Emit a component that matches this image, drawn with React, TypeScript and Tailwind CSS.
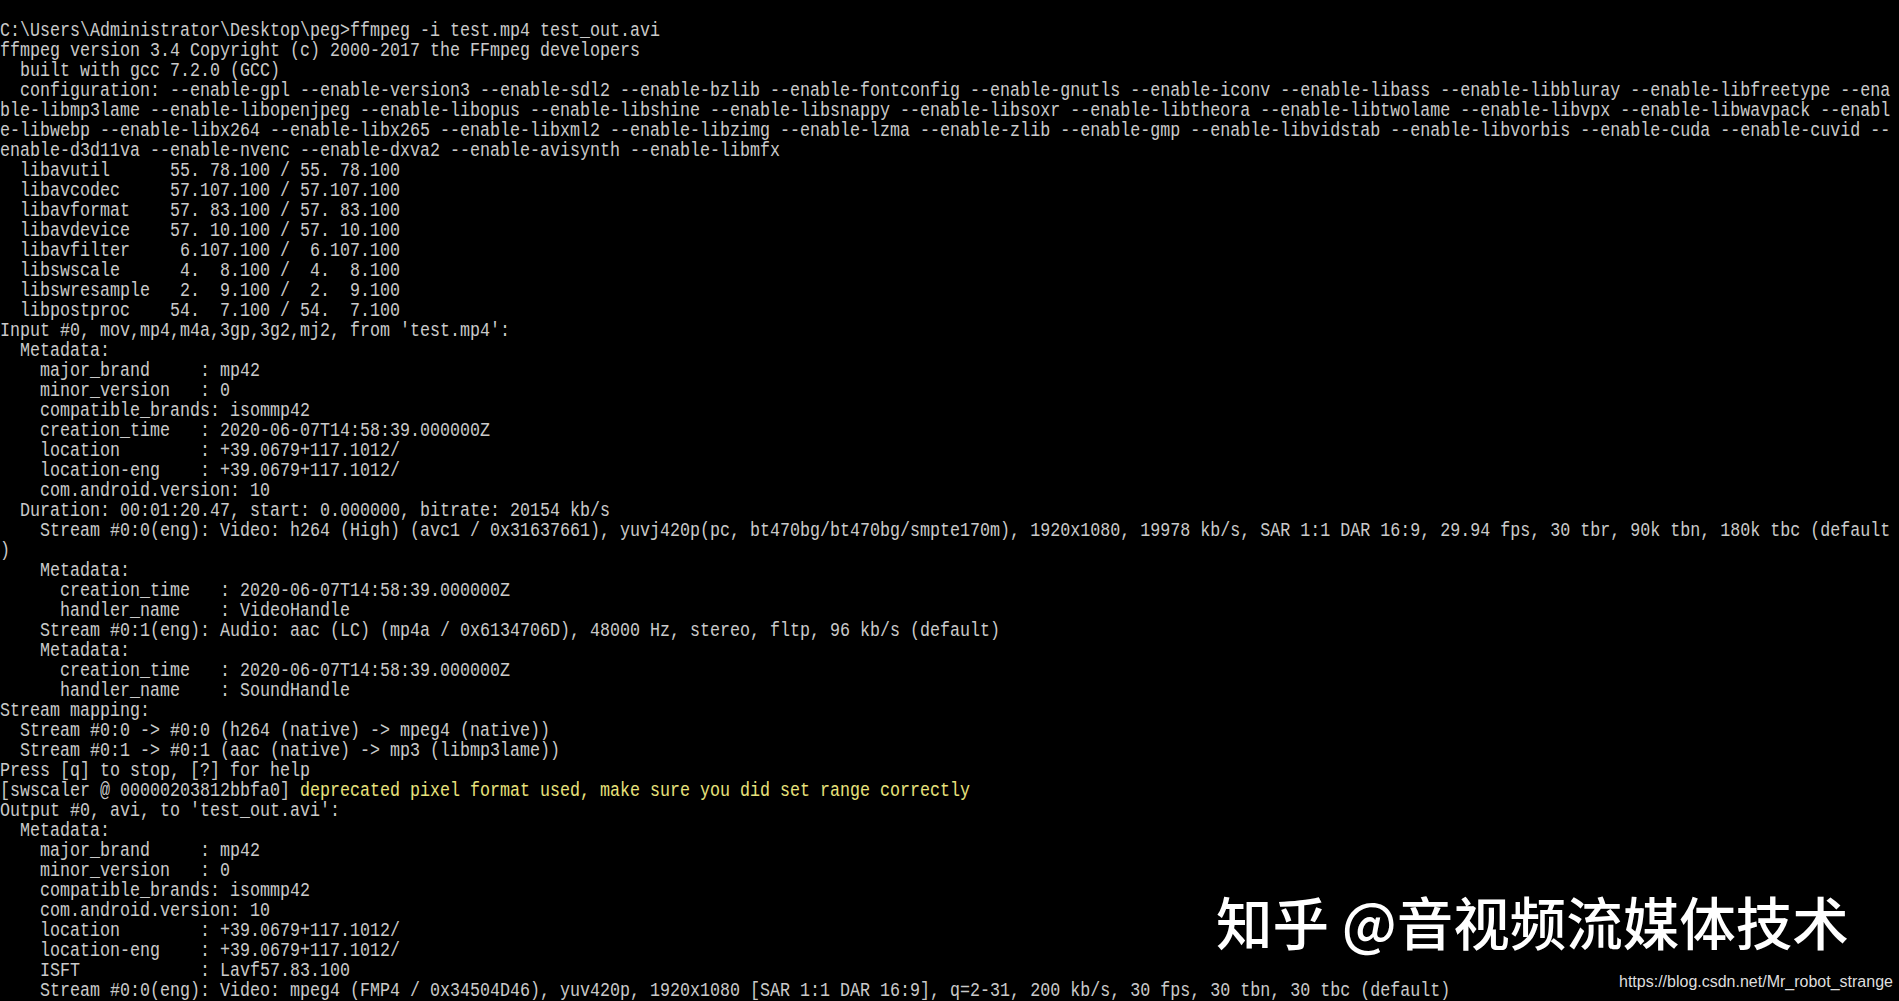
import React from 'react';

type Line = { text: string; warn?: [string, string] };

const lines: Line[] = [
  { text: 'C:\\Users\\Administrator\\Desktop\\peg>ffmpeg -i test.mp4 test_out.avi' },
  { text: 'ffmpeg version 3.4 Copyright (c) 2000-2017 the FFmpeg developers' },
  { text: '  built with gcc 7.2.0 (GCC)' },
  { text: '  configuration: --enable-gpl --enable-version3 --enable-sdl2 --enable-bzlib --enable-fontconfig --enable-gnutls --enable-iconv --enable-libass --enable-libbluray --enable-libfreetype --ena' },
  { text: 'ble-libmp3lame --enable-libopenjpeg --enable-libopus --enable-libshine --enable-libsnappy --enable-libsoxr --enable-libtheora --enable-libtwolame --enable-libvpx --enable-libwavpack --enabl' },
  { text: 'e-libwebp --enable-libx264 --enable-libx265 --enable-libxml2 --enable-libzimg --enable-lzma --enable-zlib --enable-gmp --enable-libvidstab --enable-libvorbis --enable-cuda --enable-cuvid --' },
  { text: 'enable-d3d11va --enable-nvenc --enable-dxva2 --enable-avisynth --enable-libmfx' },
  { text: '  libavutil      55. 78.100 / 55. 78.100' },
  { text: '  libavcodec     57.107.100 / 57.107.100' },
  { text: '  libavformat    57. 83.100 / 57. 83.100' },
  { text: '  libavdevice    57. 10.100 / 57. 10.100' },
  { text: '  libavfilter     6.107.100 /  6.107.100' },
  { text: '  libswscale      4.  8.100 /  4.  8.100' },
  { text: '  libswresample   2.  9.100 /  2.  9.100' },
  { text: '  libpostproc    54.  7.100 / 54.  7.100' },
  { text: "Input #0, mov,mp4,m4a,3gp,3g2,mj2, from 'test.mp4':" },
  { text: '  Metadata:' },
  { text: '    major_brand     : mp42' },
  { text: '    minor_version   : 0' },
  { text: '    compatible_brands: isommp42' },
  { text: '    creation_time   : 2020-06-07T14:58:39.000000Z' },
  { text: '    location        : +39.0679+117.1012/' },
  { text: '    location-eng    : +39.0679+117.1012/' },
  { text: '    com.android.version: 10' },
  { text: '  Duration: 00:01:20.47, start: 0.000000, bitrate: 20154 kb/s' },
  { text: '    Stream #0:0(eng): Video: h264 (High) (avc1 / 0x31637661), yuvj420p(pc, bt470bg/bt470bg/smpte170m), 1920x1080, 19978 kb/s, SAR 1:1 DAR 16:9, 29.94 fps, 30 tbr, 90k tbn, 180k tbc (default' },
  { text: ')' },
  { text: '    Metadata:' },
  { text: '      creation_time   : 2020-06-07T14:58:39.000000Z' },
  { text: '      handler_name    : VideoHandle' },
  { text: '    Stream #0:1(eng): Audio: aac (LC) (mp4a / 0x6134706D), 48000 Hz, stereo, fltp, 96 kb/s (default)' },
  { text: '    Metadata:' },
  { text: '      creation_time   : 2020-06-07T14:58:39.000000Z' },
  { text: '      handler_name    : SoundHandle' },
  { text: 'Stream mapping:' },
  { text: '  Stream #0:0 -> #0:0 (h264 (native) -> mpeg4 (native))' },
  { text: '  Stream #0:1 -> #0:1 (aac (native) -> mp3 (libmp3lame))' },
  { text: 'Press [q] to stop, [?] for help' },
  { text: '', warn: ['[swscaler @ 00000203812bbfa0] ', 'deprecated pixel format used, make sure you did set range correctly'] },
  { text: "Output #0, avi, to 'test_out.avi':" },
  { text: '  Metadata:' },
  { text: '    major_brand     : mp42' },
  { text: '    minor_version   : 0' },
  { text: '    compatible_brands: isommp42' },
  { text: '    com.android.version: 10' },
  { text: '    location        : +39.0679+117.1012/' },
  { text: '    location-eng    : +39.0679+117.1012/' },
  { text: '    ISFT            : Lavf57.83.100' },
  { text: '    Stream #0:0(eng): Video: mpeg4 (FMP4 / 0x34504D46), yuv420p, 1920x1080 [SAR 1:1 DAR 16:9], q=2-31, 200 kb/s, 30 fps, 30 tbn, 30 tbc (default)' },
];

const App: React.FC = () => {
  return (
    <div className="relative h-screen w-full overflow-hidden bg-black">
      {/* console buffer: 189 cols x 10px, 20px rows */}
      <div className="pt-[21px]">
        <div className="w-[2268px] origin-top-left scale-x-[0.8333] font-['Liberation_Mono',monospace] text-[20px] leading-[20px] text-[#cacaca]">
          {lines.map((l, i) => (
            <div key={i} className="h-[20px] whitespace-pre">
              {l.warn ? (
                <>
                  {l.warn[0]}
                  <span className="text-[#e8e27c]">{l.warn[1]}</span>
                </>
              ) : (
                l.text || ' '
              )}
            </div>
          ))}
        </div>
      </div>

      {/* watermark */}
      <div className="absolute left-[1216px] top-[880px] whitespace-pre font-['Noto_Sans_CJK_SC',sans-serif] text-[56.5px] font-medium leading-[80px] text-white">
        知乎 @音视频流媒体技术
      </div>
      <div className="absolute left-[1619px] top-[972px] font-['Liberation_Sans',Arial,sans-serif] text-[16px] leading-[20px] text-[#dedede]">
        https://blog.csdn.net/Mr_robot_strange
      </div>
    </div>
  );
};

export default App;
